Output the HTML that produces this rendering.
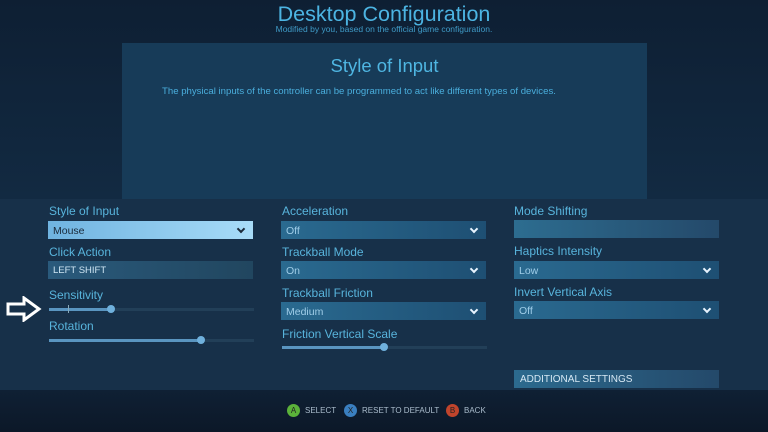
<html><head><style>
body{margin:0;width:768px;height:432px;overflow:hidden;background:#10223a;font-family:"Liberation Sans",sans-serif;position:relative}
.a{position:absolute}
.t{color:#4fb6e0;white-space:nowrap}
.lbl{font-size:12px;color:#58b4dc}
.dd{position:absolute;height:18px;width:205px;background:linear-gradient(90deg,#2a6a90,#1e4f73);color:#9fcde8;font-size:10.5px;line-height:20px;padding-left:5px;box-sizing:border-box}
.dd.c:after{content:"";position:absolute;right:9px;top:5px;width:4px;height:4px;border-right:2px solid #e8f4ff;border-bottom:2px solid #e8f4ff;transform:rotate(45deg)}
.dd.k:after{border-color:#1a2a3a}
.tr{position:absolute;height:3px;width:205px;background:#223f58}
.fill{position:absolute;height:3px;background:#5a95c0;left:0;top:0}
.kn{position:absolute;width:8px;height:8px;border-radius:50%;background:#6fb0dc;top:-3px}
.btn{position:absolute;width:13px;height:13px;border-radius:50%;font-size:8px;text-align:center;line-height:13px;color:#222}
.fl{position:absolute;font-size:8px;color:#aabccc;top:406px}
</style></head><body>
<div class="a" style="left:0;top:0;width:768px;height:200px;background:linear-gradient(#0e1f33,#122a42)"></div>
<div class="a t" style="left:0;width:768px;top:2px;text-align:center;font-size:21.5px;color:#4cb4e2">Desktop Configuration</div>
<div class="a t" style="left:0;width:768px;top:24px;text-align:center;font-size:8.5px;color:#3f9ac6">Modified by you, based on the official game configuration.</div>
<div class="a" style="left:122px;top:43px;width:525px;height:157px;background:#173b58"></div>
<div class="a t" style="left:122px;width:525px;top:55px;text-align:center;font-size:18.5px;color:#4fb6e2">Style of Input</div>
<div class="a t" style="left:162px;top:86px;font-size:9.6px;color:#4aaedc">The physical inputs of the controller can be programmed to act like different types of devices.</div>
<div class="a" style="left:0;top:199px;width:768px;height:191px;background:#173049"></div>
<div class="a" style="left:0;top:390px;width:768px;height:42px;background:linear-gradient(#0f2034,#0c1828)"></div>

<div class="a lbl" style="left:49px;top:204px">Style of Input</div>
<div class="dd c k" style="left:48px;top:221px;background:linear-gradient(90deg,#6fb3e0,#a8dcf8);color:#1a2a3a">Mouse</div>
<div class="a lbl" style="left:49px;top:245px">Click Action</div>
<div class="dd" style="left:48px;top:261px;background:linear-gradient(90deg,#2a5a7c,#21465f);color:#cfe6f4;font-size:9.5px">LEFT SHIFT</div>
<div class="a lbl" style="left:49px;top:288px">Sensitivity</div>
<div class="tr" style="left:49px;top:308px"><div class="fill" style="width:62px"></div><div class="kn" style="left:58px"></div><div class="a" style="left:19px;top:-3px;width:1px;height:8px;background:#8ab"></div></div>
<div class="a lbl" style="left:49px;top:319px">Rotation</div>
<div class="tr" style="left:49px;top:339px"><div class="fill" style="width:152px"></div><div class="kn" style="left:148px"></div></div>
<svg class="a" style="left:6px;top:296px" width="36" height="26" viewBox="0 0 36 26"><path d="M2 8H18V2L33 13L18 24V18H2Z" fill="none" stroke="#fff" stroke-width="3" stroke-linejoin="miter"/></svg>

<div class="a lbl" style="left:282px;top:204px">Acceleration</div>
<div class="dd c" style="left:281px;top:221px">Off</div>
<div class="a lbl" style="left:282px;top:245px">Trackball Mode</div>
<div class="dd c" style="left:281px;top:261px">On</div>
<div class="a lbl" style="left:282px;top:286px">Trackball Friction</div>
<div class="dd c" style="left:281px;top:302px">Medium</div>
<div class="a lbl" style="left:282px;top:327px">Friction Vertical Scale</div>
<div class="tr" style="left:282px;top:346px"><div class="fill" style="width:102px"></div><div class="kn" style="left:98px"></div></div>

<div class="a lbl" style="left:514px;top:204px">Mode Shifting</div>
<div class="dd" style="left:514px;top:220px;background:linear-gradient(90deg,#2d6d90,#24496a)"></div>
<div class="a lbl" style="left:514px;top:244px">Haptics Intensity</div>
<div class="dd c" style="left:514px;top:261px">Low</div>
<div class="a lbl" style="left:514px;top:285px">Invert Vertical Axis</div>
<div class="dd c" style="left:514px;top:301px">Off</div>
<div class="dd" style="left:514px;top:370px;background:linear-gradient(90deg,#2c6a8e,#24496a);color:#d6e8f4;font-size:10px;padding-left:6px">ADDITIONAL SETTINGS</div>

<div class="btn" style="left:287px;top:404px;background:#5bb23a">A</div><div class="fl" style="left:305px">SELECT</div>
<div class="btn" style="left:344px;top:404px;background:#3a7fc0">X</div><div class="fl" style="left:362px">RESET TO DEFAULT</div>
<div class="btn" style="left:446px;top:404px;background:#c0442c">B</div><div class="fl" style="left:464px">BACK</div>
</body></html>
